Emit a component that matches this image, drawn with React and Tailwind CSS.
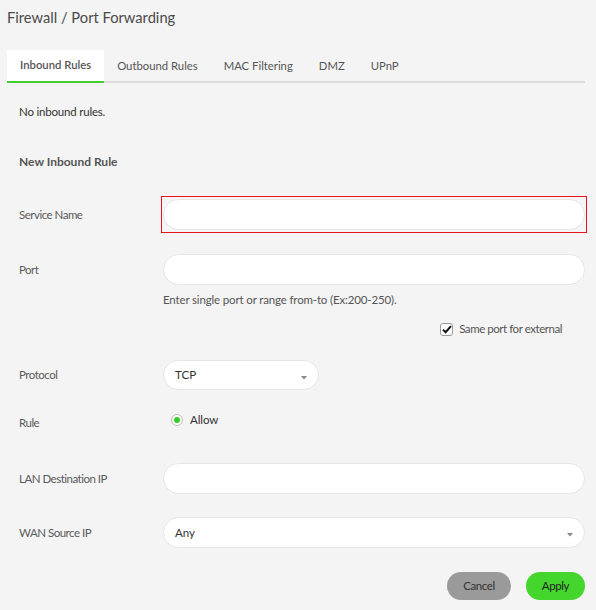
import React from 'react';

const tabs = ['Inbound Rules', 'Outbound Rules', 'MAC Filtering', 'DMZ', 'UPnP'];

const Field = ({ label, children, className = '' }) => (
  <div className={`flex items-center ${className}`}>
    <div className="w-[144px] shrink-0 text-[11.5px] tracking-[-0.5px] leading-[18px] text-[#5a5a5a]">{label}</div>
    <div className="flex-1">{children}</div>
  </div>
);

const TextInput = () => (
  <input
    type="text"
    className="block w-full h-[31px] rounded-full bg-white border border-[#e6e6e6] px-3 text-[11.5px] outline-none"
  />
);

const Caret = () => (
  <svg width="6" height="4" viewBox="0 0 6 4" className="absolute right-[11px] top-[15px]">
    <path d="M0 0h6L3 3.5z" fill="#888" />
  </svg>
);

const App = () => {
  return (
    <div className="min-h-[610px] bg-[#f4f4f4] pt-[7px] pl-[7px] pr-[11px] text-[#555]" style={{ fontFamily: 'Lato, "Open Sans", sans-serif' }}>
      <h1 className="text-[14.7px] leading-[20px] text-[#4a4a4a]">Firewall / Port Forwarding</h1>

      <div className="mt-[23px] flex border-b-2 border-[#dcdcdc]">
        {tabs.map((t, i) => (
          <div
            key={t}
            className={`h-[33px] -mb-[2px] px-[13px] flex items-center text-[11.3px] ${
              i === 0 ? 'bg-white border-b-2 border-[#44cc33] text-[#555] font-semibold' : 'text-[#555]'
            }`}
          >
            {t}
          </div>
        ))}
      </div>

      <div className="pl-[12px]">
        <p className="mt-[21px] text-[11.5px] tracking-[-0.2px] leading-[16px] text-[#333]">No inbound rules.</p>
        <h2 className="mt-[34px] text-[12px] leading-[16px] font-bold text-[#555]">New Inbound Rule</h2>

        <Field label="Service Name" className="mt-[29px]">
          <div className="relative">
            <TextInput />
            <span className="pointer-events-none absolute -left-[2px] -right-[2px] -top-[3px] -bottom-[3px] border border-[#e8141b]" />
          </div>
        </Field>

        <Field label="Port" className="mt-[24px]">
          <TextInput />
        </Field>
        <p className="ml-[144px] mt-[7px] text-[11.5px] tracking-[-0.15px] leading-[16px] text-[#555]">
          Enter single port or range from-to (Ex:200-250).
        </p>
        <label className="mt-[12px] mr-[23px] h-[18px] flex items-center justify-end gap-[6px] text-[11.5px] tracking-[-0.45px] text-[#555]">
          <span className="w-[13px] h-[13px] rounded-[3px] border border-[#999] bg-white flex items-center justify-center">
            <svg width="10" height="9" viewBox="0 0 10 9">
              <path d="M1 4.6l2.6 2.6L9 1.2" stroke="#111" strokeWidth="2" fill="none" />
            </svg>
          </span>
          Same port for external
        </label>

        <Field label="Protocol" className="mt-[22px]">
          <div className="relative w-[156px] h-[30px] rounded-full bg-white border border-[#e6e6e6] pl-[11px] flex items-center text-[11.6px] text-[#333]">
            TCP
            <Caret />
          </div>
        </Field>

        <Field label="Rule" className="mt-[24px]">
          <div className="pl-[8px] -mt-[6px] flex items-center gap-[7px] text-[11.5px] tracking-[-0.1px] text-[#333]">
            <span className="w-[12px] h-[12px] rounded-full bg-white border border-[#bbb] flex items-center justify-center">
              <span className="w-[6px] h-[6px] rounded-full bg-[#33cc22]" />
            </span>
            Allow
          </div>
        </Field>

        <Field label="LAN Destination IP" className="mt-[31px]">
          <TextInput />
        </Field>

        <Field label="WAN Source IP" className="mt-[23px]">
          <div className="relative h-[31px] rounded-full bg-white border border-[#e6e6e6] pl-[11px] flex items-center text-[11.5px] text-[#333]">
            Any
            <Caret />
          </div>
        </Field>

        <div className="mt-[24px] flex justify-end gap-[15px]">
          <button className="w-[64px] h-[28px] rounded-full bg-[#9a9a9a] text-[11.5px] tracking-[-0.4px] text-[#333]">Cancel</button>
          <button className="w-[59px] h-[28px] rounded-full bg-[#44d62c] text-[11.5px] tracking-[-0.4px] text-[#222]">Apply</button>
        </div>
      </div>
    </div>
  );
};

export default App;
